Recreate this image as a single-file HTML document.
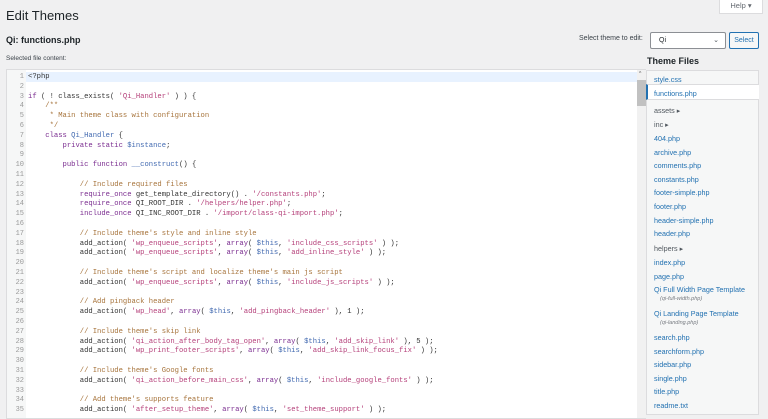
<!DOCTYPE html>
<html><head><meta charset="utf-8"><style>
*{box-sizing:border-box;margin:0;padding:0}
body{width:768px;height:411px;overflow:hidden;background:#f0f0f1;font-family:"Liberation Sans",sans-serif;color:#1d2327;position:relative}
.a{position:absolute;white-space:nowrap}
#ed{position:absolute;left:6px;top:69px;width:640px;height:350px;background:#fff;border:1px solid #dcdcde}
#gut{position:absolute;left:0;top:0;width:19px;height:100%;background:#f6f7f7}
.ln{position:absolute;left:0;width:17px;text-align:right;font:7px "Liberation Mono",monospace;color:#999}
.cl{position:absolute;left:21px;font:7.2px "Liberation Mono",monospace;color:#333;white-space:pre}
.c{color:#a7743c}.s{color:#b5407a}.k{color:#7a2c8f}.v{color:#4169b0}
#sb{position:absolute;left:630px;top:0;width:9px;height:100%;background:#f1f1f1}
#fl{position:absolute;left:646px;top:70px;width:113px;height:345px;background:#f6f7f7;border:1px solid #dcdcde}
.f{position:absolute;left:7px;font-size:7.2px;color:#2271b1;white-space:nowrap}
.d{color:#50575e}
.sm{font-size:5.5px;font-style:italic;color:#787c82;left:13px}
</style></head><body>
<div class="a" style="left:6px;top:8px;font-size:13px;color:#1d2327">Edit Themes</div>
<div class="a" style="left:6px;top:35px;font-size:9px;font-weight:bold">Qi: functions.php</div>
<div class="a" style="left:6px;top:55px;font-size:6.5px;color:#3c434a">Selected file content:</div>
<div class="a" style="left:719px;top:-1px;width:44px;height:15px;background:#fff;border:1px solid #dcdcde;border-top:none;font-size:7.5px;color:#646970;text-align:center;line-height:14px">Help ▾</div>
<div class="a" style="left:579px;top:35px;font-size:7px;color:#3c434a">Select theme to edit:</div>
<div class="a" style="left:650px;top:32px;width:76px;height:17px;background:#fff;border:1px solid #8c8f94;border-radius:2px;font-size:7px;line-height:15px;padding-left:8px">Qi<span style="position:absolute;right:6px;color:#50575e">⌄</span></div>
<div class="a" style="left:729px;top:32px;width:30px;height:17px;background:#f6f7f7;border:1px solid #2271b1;border-radius:2px;font-size:7px;line-height:15px;color:#2271b1;text-align:center">Select</div>
<div class="a" style="left:647px;top:56px;font-size:9px;font-weight:bold;color:#1d2327">Theme Files</div>
<div id="ed"><div id="gut"></div>
<div style="position:absolute;left:19px;top:2px;width:611px;height:10px;background:#e8f2ff"></div>
<div id="sb"><div style="position:absolute;left:0;top:10px;width:9px;height:26px;background:#c1c1c1"></div><div style="position:absolute;left:2px;top:1px;font-size:5px;color:#555">^</div></div>
<div id="code"></div>
</div>
<div id="fl">
<div style="position:absolute;left:-1px;top:13px;width:113px;height:16px;background:#fff;border-left:2px solid #2271b1;border-top:1px solid #dcdcde;border-bottom:1px solid #dcdcde"></div>
<div class="f" style="top:4px">style.css</div>
<div class="f" style="top:18px">functions.php</div>
<div class="f d" style="top:35px">assets ▸</div>
<div class="f d" style="top:49px">inc ▸</div>
<div class="f" style="top:63px">404.php</div>
<div class="f" style="top:77px">archive.php</div>
<div class="f" style="top:90px">comments.php</div>
<div class="f" style="top:104px">constants.php</div>
<div class="f" style="top:117px">footer-simple.php</div>
<div class="f" style="top:131px">footer.php</div>
<div class="f" style="top:145px">header-simple.php</div>
<div class="f" style="top:158px">header.php</div>
<div class="f d" style="top:173px">helpers ▸</div>
<div class="f" style="top:187px">index.php</div>
<div class="f" style="top:201px">page.php</div>
<div class="f" style="top:214px">Qi Full Width Page Template</div>
<div class="f sm" style="top:225px">(qi-full-width.php)</div>
<div class="f" style="top:238px">Qi Landing Page Template</div>
<div class="f sm" style="top:249px">(qi-landing.php)</div>
<div class="f" style="top:262px">search.php</div>
<div class="f" style="top:276px">searchform.php</div>
<div class="f" style="top:289px">sidebar.php</div>
<div class="f" style="top:303px">single.php</div>
<div class="f" style="top:316px">title.php</div>
<div class="f" style="top:330px">readme.txt</div>
</div>
<script>
var L=[
'&lt;?php','',
'<span class="k">if</span> ( ! class_exists( <span class="s">\'Qi_Handler\'</span> ) ) {',
'    <span class="c">/**</span>',
'     <span class="c">* Main theme class with configuration</span>',
'     <span class="c">*/</span>',
'    <span class="k">class</span> <span class="v">Qi_Handler</span> {',
'        <span class="k">private static</span> <span class="v">$instance</span>;',
'',
'        <span class="k">public function</span> <span class="v">__construct</span>() {',
'',
'            <span class="c">// Include required files</span>',
'            <span class="k">require_once</span> get_template_directory() . <span class="s">\'/constants.php\'</span>;',
'            <span class="k">require_once</span> QI_ROOT_DIR . <span class="s">\'/helpers/helper.php\'</span>;',
'            <span class="k">include_once</span> QI_INC_ROOT_DIR . <span class="s">\'/import/class-qi-import.php\'</span>;',
'',
'            <span class="c">// Include theme\'s style and inline style</span>',
'            add_action( <span class="s">\'wp_enqueue_scripts\'</span>, <span class="k">array</span>( <span class="v">$this</span>, <span class="s">\'include_css_scripts\'</span> ) );',
'            add_action( <span class="s">\'wp_enqueue_scripts\'</span>, <span class="k">array</span>( <span class="v">$this</span>, <span class="s">\'add_inline_style\'</span> ) );',
'',
'            <span class="c">// Include theme\'s script and localize theme\'s main js script</span>',
'            add_action( <span class="s">\'wp_enqueue_scripts\'</span>, <span class="k">array</span>( <span class="v">$this</span>, <span class="s">\'include_js_scripts\'</span> ) );',
'',
'            <span class="c">// Add pingback header</span>',
'            add_action( <span class="s">\'wp_head\'</span>, <span class="k">array</span>( <span class="v">$this</span>, <span class="s">\'add_pingback_header\'</span> ), 1 );',
'',
'            <span class="c">// Include theme\'s skip link</span>',
'            add_action( <span class="s">\'qi_action_after_body_tag_open\'</span>, <span class="k">array</span>( <span class="v">$this</span>, <span class="s">\'add_skip_link\'</span> ), 5 );',
'            add_action( <span class="s">\'wp_print_footer_scripts\'</span>, <span class="k">array</span>( <span class="v">$this</span>, <span class="s">\'add_skip_link_focus_fix\'</span> ) );',
'',
'            <span class="c">// Include theme\'s Google fonts</span>',
'            add_action( <span class="s">\'qi_action_before_main_css\'</span>, <span class="k">array</span>( <span class="v">$this</span>, <span class="s">\'include_google_fonts\'</span> ) );',
'',
'            <span class="c">// Add theme\'s supports feature</span>',
'            add_action( <span class="s">\'after_setup_theme\'</span>, <span class="k">array</span>( <span class="v">$this</span>, <span class="s">\'set_theme_support\'</span> ) );'
];
var h='';for(var i=0;i<L.length;i++){var t=3+i*9.8;h+='<div class="ln" style="top:'+t+'px">'+(i+1)+'</div><div class="cl" style="top:'+t+'px">'+L[i]+'</div>';}
document.getElementById('code').innerHTML=h;
</script>
</body></html>
